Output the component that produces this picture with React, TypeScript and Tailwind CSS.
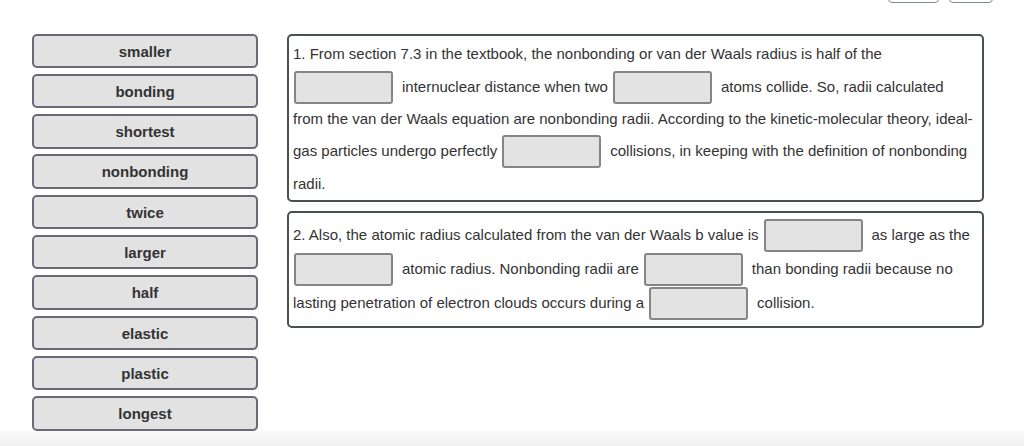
import React from "react";

const words = [
  "smaller",
  "bonding",
  "shortest",
  "nonbonding",
  "twice",
  "larger",
  "half",
  "elastic",
  "plastic",
  "longest",
];

function Blank({ first }: { first?: boolean }) {
  return (
    <span
      className={`inline-block shrink-0 w-[99px] h-[33px] rounded-[3px] border-2 border-[#858585] bg-[#e3e3e3] ${
        first ? "ml-[1px]" : "ml-[5px]"
      }`}
    />
  );
}

function T({ children, after }: { children: React.ReactNode; after?: boolean }) {
  return <span className={`whitespace-nowrap ${after ? "ml-[9px]" : ""}`}>{children}</span>;
}

export default function App() {
  return (
    <div
      className="w-[1024px] h-[446px] bg-white flex flex-col overflow-hidden text-[#333]"
      style={{ fontFamily: '"Liberation Sans", Arial, Helvetica, sans-serif' }}
    >
      {/* cut-off top buttons */}
      <div className="h-[3px] overflow-hidden flex justify-end items-end gap-[10px] pr-[31px]">
        <div className="w-[51px] h-[30px] shrink-0 rounded-[4px] border border-[#7f8b8c] bg-white" />
        <div className="w-[44px] h-[30px] shrink-0 rounded-[4px] border border-[#7f8b8c] bg-white" />
      </div>

      <div className="flex h-[428px] pl-[32px] pt-[30px]">
        {/* word bank */}
        <div className="flex flex-col gap-[5.8px] w-[226px] shrink-0 pt-[0.5px]">
          {words.map((w) => (
            <div
              key={w}
              className="h-[34.5px] rounded-[5px] border-2 border-[#6a6978] bg-[#e2e2e2] flex items-center justify-center pt-[2px] text-[15px] font-bold text-[#333]"
            >
              {w}
            </div>
          ))}
        </div>

        {/* questions */}
        <div className="ml-[29px] w-[697px] flex flex-col gap-[9px] pt-[1px] text-[15px]">
          <div className="h-[168px] rounded-[5px] border-2 border-[#4a504e] pl-[4px] pt-[2px]">
            <div className="h-[33px] flex items-center">
              <T>1. From section 7.3 in the textbook, the nonbonding or van der Waals radius is half of the</T>
            </div>
            <div className="h-[33px] flex items-center">
              <Blank first />
              <T after>internuclear distance when two</T>
              <Blank />
              <T after>atoms collide. So, radii calculated</T>
            </div>
            <div className="h-[30px] flex items-center">
              <T>from the van der Waals equation are nonbonding radii. According to the kinetic-molecular theory, ideal-</T>
            </div>
            <div className="h-[34px] flex items-center">
              <T>gas particles undergo perfectly</T>
              <Blank />
              <T after>collisions, in keeping with the definition of nonbonding</T>
            </div>
            <div className="h-[32px] flex items-center">
              <T>radii.</T>
            </div>
          </div>

          <div className="h-[117px] rounded-[5px] border-2 border-[#4a504e] pl-[4px] pt-[5px]">
            <div className="h-[34px] flex items-center">
              <T>2. Also, the atomic radius calculated from the van der Waals b value is</T>
              <Blank />
              <T after>as large as the</T>
            </div>
            <div className="h-[34px] flex items-center">
              <Blank first />
              <T after>atomic radius. Nonbonding radii are</T>
              <Blank />
              <T after>than bonding radii because no</T>
            </div>
            <div className="h-[34px] flex items-center">
              <T>lasting penetration of electron clouds occurs during a</T>
              <Blank />
              <T after>collision.</T>
            </div>
          </div>
        </div>
      </div>

      <div className="h-[15px] bg-gradient-to-b from-[#f9f9f9] to-[#f1f1f1]" />
    </div>
  );
}
